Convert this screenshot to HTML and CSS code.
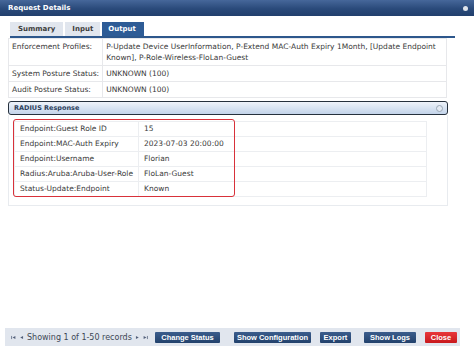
FILE: index.html
```html
<!DOCTYPE html>
<html lang="en">
	<head>
		<meta charset="UTF-8" />
		<title>Request Details</title>
		<link rel="stylesheet" href="styles.css">
	</head>
	<body>
		<div class="dialog">
			<div class="titlebar">
				<span class="title">Request Details</span>
				<span class="title-dot"></span>
			</div>

			<div class="tabs">
				<div class="tab">Summary</div>
				<div class="tab">Input</div>
				<div class="tab active">Output</div>
			</div>

			<table class="info">
				<tr>
					<td class="label">Enforcement Profiles:</td>
					<td>P-Update Device UserInformation, P-Extend MAC-Auth Expiry 1Month, [Update Endpoint Known], P-Role-Wireless-FloLan-Guest</td>
				</tr>
				<tr>
					<td class="label">System Posture Status:</td>
					<td>UNKNOWN (100)</td>
				</tr>
				<tr>
					<td class="label">Audit Posture Status:</td>
					<td>UNKNOWN (100)</td>
				</tr>
			</table>

			<div class="section-bar">
				<span>RADIUS Response</span>
				<span class="section-dot"></span>
			</div>

			<div class="section-body">
				<div class="highlight"></div>
				<table class="radius">
					<tr><td class="key">Endpoint:Guest Role ID</td><td>15</td></tr>
					<tr><td class="key">Endpoint:MAC-Auth Expiry</td><td>2023-07-03 20:00:00</td></tr>
					<tr><td class="key">Endpoint:Username</td><td>Florian</td></tr>
					<tr><td class="key">Radius:Aruba:Aruba-User-Role</td><td>FloLan-Guest</td></tr>
					<tr><td class="key">Status-Update:Endpoint</td><td>Known</td></tr>
				</table>
			</div>

			<div class="spacer"></div>

			<div class="footer">
				<div class="pager">
					<svg class="nav" viewBox="0 0 8 8"><rect x="0.5" y="1.5" width="1.2" height="5" /><path d="M7 1.5v5L2.5 4z" /></svg>
					<svg class="nav" viewBox="0 0 8 8"><path d="M6.5 1.5v5L2 4z" /></svg>
					<span>Showing 1 of 1-50 records</span>
					<svg class="nav" viewBox="0 0 8 8"><path d="M1.5 1.5v5L6 4z" /></svg>
					<svg class="nav" viewBox="0 0 8 8"><path d="M1 1.5v5L5.5 4z" /><rect x="6.3" y="1.5" width="1.2" height="5" /></svg>
				</div>
				<button class="btn btn-status">Change Status</button>
				<button class="btn btn-config">Show Configuration</button>
				<button class="btn btn-export">Export</button>
				<button class="btn btn-logs">Show Logs</button>
				<button class="btn btn-close">Close</button>
			</div>
		</div>
	</body>
</html>
```

FILE: styles.css
```css
body {
	margin: 0;
	background-color: #ffffff;
	font-family: "DejaVu Sans", Verdana, sans-serif;
	font-size: 7.5px;
	color: #3a3a3a;
}

.dialog {
	display: flex;
	flex-direction: column;
	height: 353px;
}

.titlebar {
	display: flex;
	align-items: center;
	justify-content: space-between;
	height: 16px;
	padding: 0 6px 0 8px;
	background-image: linear-gradient(to bottom, #46679a, #2a4a7a 55%, #213f6d);
}

.title {
	color: #ffffff;
	font-weight: bold;
	font-size: 7px;
}

.title-dot {
	width: 5px;
	height: 5px;
	border-radius: 50%;
	background-color: #ffffff;
	opacity: 0.85;
}

.tabs {
	display: flex;
	gap: 2px;
	margin: 6px 19px 0 10px;
	border-bottom: 2px solid #2d578c;
}

.tab {
	padding: 3px 7px 2px 7px;
	height: 9px;
	background-color: #e1e6ee;
	font-weight: bold;
	font-size: 7px;
	color: #3c3c3c;
}

.tab:first-child {
	padding: 3px 8px 2px 8px;
}

.tab.active {
	background-color: #2e5c96;
	color: #ffffff;
	padding: 3px 8px 2px 6px;
}

.info {
	border-collapse: collapse;
	margin: 0 27px 0 8px;
	width: 439px;
}

.info td {
	border: 1px solid #e7e8eb;
	padding: 2px 3px 2px 3px;
	line-height: 11px;
	vertical-align: top;
}

.info .label {
	width: 87px;
	white-space: nowrap;
}

.section-bar {
	display: flex;
	align-items: center;
	justify-content: space-between;
	margin: 3px 26px 0 8px;
	height: 12px;
	padding: 0 4px 0 5px;
	border: 1.5px solid #26313d;
	border-radius: 3px;
	background-image: linear-gradient(to bottom, #eef3fa, #c3d4ea);
	font-weight: bold;
	font-size: 6.5px;
	color: #2c3f5c;
}

.section-dot {
	width: 5px;
	height: 5px;
	border-radius: 50%;
	border: 1px solid #9aa7b5;
	background-color: #e4ebf4;
}

.section-body {
	position: relative;
	margin: 0 26px 0 8px;
	padding: 6px 20px 8px 5px;
	border: 1px solid #e8ebef;
	border-top: none;
}

.highlight {
	position: absolute;
	left: 4px;
	top: 4px;
	width: 220px;
	height: 76px;
	border: 1.5px solid #d8313a;
	border-radius: 3px;
}

.radius {
	border-collapse: collapse;
	width: 100%;
}

.radius td {
	border: 1px solid #eceef1;
	padding: 2px 5px;
	height: 10px;
	line-height: 10px;
	white-space: nowrap;
}

.radius .key {
	width: 113px;
}

.spacer {
	flex: 1;
}

.footer {
	display: flex;
	align-items: center;
	margin: 0 14px 7px 5px;
	height: 18px;
	padding: 0 0 0 6px;
	background-color: #e1e6ee;
}

.pager {
	display: flex;
	flex: none;
	align-items: center;
	gap: 3px;
	width: 139px;
	margin-right: 5px;
	white-space: nowrap;
	font-size: 8px;
	color: #3d4655;
}

.nav {
	flex: none;
	width: 5px;
	height: 5px;
	fill: #53607a;
}

.btn {
	flex: none;
	height: 11px;
	padding: 0;
	border: none;
	border-radius: 1px;
	background-image: linear-gradient(to bottom, #3b5d8c, #22416c);
	color: #ffffff;
	font-family: "Liberation Sans", Arial, sans-serif;
	font-weight: bold;
	font-size: 7.5px;
	line-height: 11px;
}

.btn-status {
	width: 65px;
	margin-right: 14px;
}

.btn-config {
	width: 77px;
	margin-right: 9px;
}

.btn-export {
	width: 31px;
	margin-right: 13px;
}

.btn-logs {
	width: 52px;
	margin-right: 9px;
}

.btn-close {
	width: 32px;
	background-image: linear-gradient(to bottom, #e8373a, #c8191d);
}
```
